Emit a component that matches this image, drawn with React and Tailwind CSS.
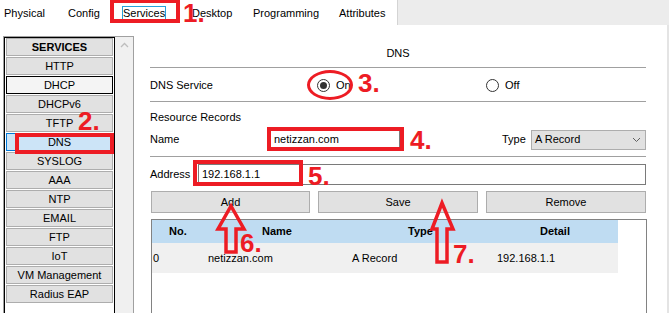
const SERVICES = ['HTTP', 'DHCP', 'DHCPv6', 'TFTP', 'DNS', 'SYSLOG', 'AAA', 'NTP', 'EMAIL', 'FTP', 'IoT', 'VM Management', 'Radius EAP']

const TABS = [
  { name: 'Physical', w: 'w-[64px]' },
  { name: 'Config', w: 'w-[55px]' },
  { name: 'Services', w: 'w-[69px]', active: true },
  { name: 'Desktop', w: 'w-[61px]' },
  { name: 'Programming', w: 'w-[86px]' },
  { name: 'Attributes', w: 'w-[58px]' },
]

function ServiceBtn({ name }) {
  const cls =
    name === 'DNS'
      ? 'bg-[#cce4f7] border-[#0078d7]'
      : name === 'DHCP'
      ? 'bg-[#f4f4f4] border-black'
      : 'bg-[#e1e1e1] border-[#adadad]'
  return (
    <div className={`h-[18px] mb-[1px] border ${cls} flex items-center justify-center text-[11px] leading-none`}>
      {name}
    </div>
  )
}

function Radio({ checked }) {
  return (
    <span className="w-[13px] h-[13px] rounded-full border border-[#333] bg-white flex items-center justify-center flex-shrink-0">
      {checked && <span className="w-[7px] h-[7px] rounded-full bg-[#333]" />}
    </span>
  )
}

function Btn({ children, w }) {
  return (
    <div className={`${w} h-[22px] bg-[#e1e1e1] border border-[#adadad] flex items-center justify-center text-[11px]`}>
      {children}
    </div>
  )
}

function Num({ children, className }) {
  return (
    <span className={`absolute text-[26px] leading-[26px] font-bold text-[#ed1c24] ${className}`}>{children}</span>
  )
}

export default function App() {
  return (
    <div className="relative w-[669px] h-[313px] bg-white overflow-hidden text-black font-['Liberation_Sans',Arial,sans-serif]">
      {/* tab strip */}
      <div className="flex h-[25px]">
        <div className="w-[397px] bg-white flex pl-[4px] pt-[2px] items-center text-[11px]">
          {TABS.map(t => (
            <div key={t.name} className={`${t.w} flex-shrink-0`}>
              <span className={t.active ? 'border border-[#26a0da] -ml-[1px]' : ''}>{t.name}</span>
            </div>
          ))}
        </div>
        <div className="flex-1 bg-[#ececec] border-l border-[#d4d4d4]" />
      </div>

      <div className="flex">
        {/* services list */}
        <div className="ml-[3px] mt-[11px] w-[131px] h-[300px] border border-[#a0a0a0] flex">
          <div className="w-[111px] border border-black border-b-0 px-[1px]">
            <div className="h-[18px] mb-[1px] border border-[#adadad] bg-[#e1e1e1] flex items-center justify-center text-[11px] font-bold leading-none">
              SERVICES
            </div>
            {SERVICES.map(s => (
              <ServiceBtn key={s} name={s} />
            ))}
          </div>
          <div className="flex-1 bg-[#f0f0f0] flex justify-center pt-[5px]">
            <svg width="9" height="6" viewBox="0 0 9 6">
              <path d="M1 5 L4.5 1.5 L8 5" fill="none" stroke="#bdbdbd" strokeWidth="1.3" />
            </svg>
          </div>
        </div>

        {/* DNS panel */}
        <div className="ml-[16px] w-[496px] text-[11px]">
          <div className="h-[42px] pt-[21px] text-center leading-[14px]">DNS</div>
          <div className="h-px bg-[#a0a0a0]" />
          <div className="h-[33px] flex items-center pt-[1px]">
            <div className="w-[167px]">DNS Service</div>
            <div className="w-[169px] flex items-center gap-[6px]">
              <Radio checked />
              <span>On</span>
            </div>
            <div className="flex items-center gap-[6px]">
              <Radio />
              <span>Off</span>
            </div>
          </div>
          <div className="h-px bg-[#a0a0a0]" />
          <div className="pt-[8px] leading-[14px]">Resource Records</div>
          <div className="mt-[6px] h-[19px] flex items-center">
            <div className="w-[120px]">Name</div>
            <div className="w-[130px] h-[19px] border border-[#7a7a7a] bg-white flex items-center pl-[3px]">netizzan.com</div>
            <div className="ml-[102px] w-[29px]">Type</div>
            <div className="w-[115px] h-[20px] bg-[#e1e1e1] border border-[#adadad] flex items-center justify-between pl-[3px] pr-[4px]">
              <span>A Record</span>
              <svg width="9" height="6" viewBox="0 0 9 6">
                <path d="M1 1 L4.5 4.5 L8 1" fill="none" stroke="#606060" strokeWidth="1" />
              </svg>
            </div>
          </div>
          <div className="mt-[7px] h-px bg-[#a0a0a0]" />
          <div className="mt-[7px] h-[21px] flex items-center">
            <div className="w-[48px]">Address</div>
            <div className="flex-1 h-[21px] border border-[#7a7a7a] bg-white flex items-center pl-[3px]">192.168.1.1</div>
          </div>
          <div className="mt-[6px] flex gap-[8px] pl-[1px]">
            <Btn w="w-[159px]">Add</Btn>
            <Btn w="w-[160px]">Save</Btn>
            <Btn w="w-[160px]">Remove</Btn>
          </div>
          <div className="mt-[6px] ml-[1px] w-[496px] h-[120px] border border-[#828282]">
            <div className="w-[466px] h-[23px] bg-[#bfdcf2] flex items-center font-bold">
              <div className="w-[48px] pl-[17px]">No.</div>
              <div className="w-[150px] pl-[62px]">Name</div>
              <div className="w-[145px] pl-[58px]">Type</div>
              <div className="flex-1 pl-[45px]">Detail</div>
            </div>
            <div className="w-[466px] h-[30px] bg-[#f0f0f0] flex items-center">
              <div className="w-[48px] pl-[1px]">0</div>
              <div className="w-[150px] pl-[8px]">netizzan.com</div>
              <div className="w-[145px] pl-[2px]">A Record</div>
              <div className="flex-1 pl-[2px]">192.168.1.1</div>
            </div>
          </div>
        </div>
        <div className="flex-1" />
      </div>
      <div className="absolute right-0 top-[25px] w-[2px] h-[288px] bg-[#e4e4e4]" />

      {/* annotations */}
      <div className="absolute left-[110px] top-[-1px] w-[70px] h-[24px] border-4 border-[#ed1c24]" />
      <Num className="left-[183px] top-0">1.</Num>
      <div className="absolute left-[15px] top-[133px] w-[99px] h-[21px] border-4 border-[#ed1c24]" />
      <Num className="left-[78px] top-[108px]">2.</Num>
      <div className="absolute left-[307px] top-[70px] w-[46px] h-[30px] rounded-[50%] border-[3px] border-[#ed1c24]" />
      <Num className="left-[358px] top-[70px]">3.</Num>
      <div className="absolute left-[267px] top-[127px] w-[137px] h-[24px] border-4 border-[#ed1c24]" />
      <Num className="left-[410px] top-[127px]">4.</Num>
      <div className="absolute left-[193px] top-[160px] w-[110px] h-[26px] border-4 border-[#ed1c24]" />
      <Num className="left-[308px] top-[163px]">5.</Num>
      <Num className="left-[240px] top-[230px]">6.</Num>
      <Num className="left-[453px] top-[241px]">7.</Num>
      <svg className="absolute left-0 top-0" width="669" height="313">
        <polygon
          points="231,206 244,229 236,229 236,252 226,252 226,229 218,229"
          fill="none"
          stroke="#ed1c24"
          strokeWidth="3.5"
        />
        <polygon
          points="442,203 453,229 447,229 447,262 437,262 437,229 432,229"
          fill="none"
          stroke="#ed1c24"
          strokeWidth="3.5"
        />
      </svg>
    </div>
  )
}
